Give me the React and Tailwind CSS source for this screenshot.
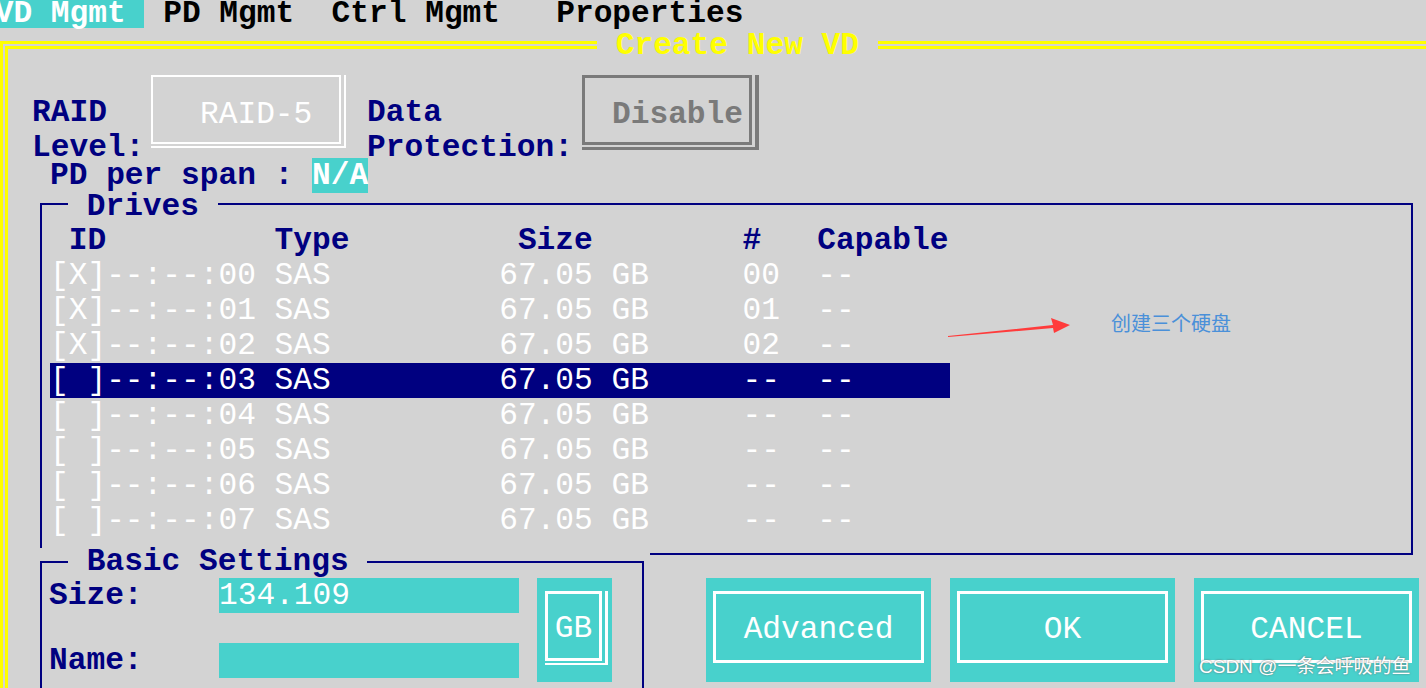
import React from "react";

const NAVY = "text-[#000080]";

const drives = [
  { id: "00", num: "00", checked: true },
  { id: "01", num: "01", checked: true },
  { id: "02", num: "02", checked: true },
  { id: "03", num: "--", checked: false, active: true },
  { id: "04", num: "--", checked: false },
  { id: "05", num: "--", checked: false },
  { id: "06", num: "--", checked: false },
  { id: "07", num: "--", checked: false },
];

const sp = (n) => " ".repeat(n);

// fixed character columns, like the text-mode screen
const headerLine = " ID" + sp(9) + "Type" + sp(9) + "Size" + sp(8) + "#" + sp(3) + "Capable";
const driveLine = (d) =>
  `${d.checked ? "[X]" : "[ ]"}--:--:${d.id} SAS${sp(9)}67.05 GB${sp(5)}${d.num}  --`;

const TextButton = ({ label }) => (
  <div className="h-[104px] w-[225px] shrink-0 bg-[#48d1cc] px-[7px] pt-[13px]">
    <div className="flex h-[72px] items-center justify-center border-[3px] border-white pt-[4px] text-white">
      {label}
    </div>
  </div>
);

export default function App() {
  return (
    <div className="relative h-[688px] w-full overflow-hidden bg-[#d3d3d3] font-['Liberation_Mono',monospace] text-[31.2px] leading-[35px]">
      {/* Top menu */}
      <div className="ml-[-24px] flex h-[28px] whitespace-pre font-bold leading-[28px] text-black">
        <span className="bg-[#48d1cc] text-white"> VD Mgmt </span>
        <span> PD Mgmt  Ctrl Mgmt   Properties</span>
      </div>

      {/* Dialog frame */}
      <fieldset className="mt-[5px] min-h-[700px] w-[1440px] border-[8px] border-double border-[#ffff00]">
        <legend className="ml-[589px] whitespace-pre pt-[2px] font-bold leading-[22px] text-[#ffff00]"> Create New VD </legend>

        {/* RAID / protection row */}
        <div className="mt-[18px] flex h-[83px] items-start pl-[24px]">
          <div className={`w-[119px] pt-[20px] font-bold ${NAVY}`}>
            <div>RAID</div>
            <div>Level:</div>
          </div>
          <div className="border-r-2 border-b-2 border-white pr-[3px] pb-[2px]">
            <div className="h-[69px] w-[190px] border-2 border-white pl-[47px] pt-[20px] text-white">RAID-5</div>
          </div>
          <div className={`ml-[21px] w-[215px] pt-[20px] font-bold ${NAVY}`}>
            <div>Data</div>
            <div>Protection:</div>
          </div>
          <div className="border-r-[4px] border-b-[3px] border-[#7a7a7a] pr-[3px] pb-[2px]">
            <div className="h-[70px] w-[170px] border-[3px] border-[#7a7a7a] pl-[27px] pt-[19px] font-bold text-[#7a7a7a]">Disable</div>
          </div>
        </div>

        <div className={`h-[29px] whitespace-pre pl-[42px] font-bold ${NAVY}`}>
          PD per span : <span className="bg-[#48d1cc] text-white">N/A</span>
        </div>

        {/* Drives */}
        <fieldset className="ml-[32px] w-[1373px] border-2 border-b-0 border-[#000080] pb-[10px]">
          <legend className={`ml-[26px] whitespace-pre pt-[6px] font-bold leading-[28px] ${NAVY}`}> Drives </legend>
          <div className="mt-[2px] pl-[8px]">
            <div className={`whitespace-pre font-bold ${NAVY}`}>{headerLine}</div>
            {drives.map((d) => (
              <div
                key={d.id}
                className={`h-[35px] w-[900px] whitespace-pre text-white ${d.active ? "bg-[#000080]" : ""}`}
              >
                {driveLine(d)}
              </div>
            ))}
          </div>
        </fieldset>

        {/* Basic settings + buttons */}
        <div className="ml-[32px] flex items-start">
          <fieldset className="h-[200px] w-[604px] shrink-0 border-2 border-[#000080]">
            <legend className={`ml-[26px] whitespace-pre font-bold leading-[28px] ${NAVY}`}> Basic Settings </legend>
            <div className="flex pl-[7px] pt-[2px]">
              <div>
                <div className="flex">
                  <div className={`w-[170px] font-bold ${NAVY}`}>Size:</div>
                  <div className="h-[35px] w-[300px] bg-[#48d1cc] text-white">134.109</div>
                </div>
                <div className="mt-[30px] flex">
                  <div className={`w-[170px] font-bold ${NAVY}`}>Name:</div>
                  <div className="h-[35px] w-[300px] bg-[#48d1cc]"></div>
                </div>
              </div>
              <div className="ml-[18px] h-[104px] w-[75px] shrink-0 bg-[#48d1cc] pl-[8px] pt-[13px]">
                <div className="w-fit border-r-[3px] border-b-2 border-white pr-[3px] pb-[2px]">
                  <div className="flex h-[70px] w-[57px] items-center justify-center border-[3px] border-white pt-[4px] text-white">
                    GB
                  </div>
                </div>
              </div>
            </div>
          </fieldset>

          <div className="ml-[6px] w-[763px] shrink-0">
            <div className="h-[7px] border-r-2 border-b-2 border-[#000080]"></div>
            <div className="mt-[23px] flex gap-[19px] pl-[56px]">
              <TextButton label="Advanced" />
              <TextButton label="OK" />
              <TextButton label="CANCEL" />
            </div>
          </div>
        </div>
      </fieldset>

      {/* Annotation over the screenshot */}
      <svg className="absolute left-[940px] top-[310px]" width="140" height="35" viewBox="0 0 140 35">
        <polygon points="8,26 113,15 111,8 130,15 114,23 113,18 8,27" fill="#ff3b3b" />
      </svg>
      <div className="absolute left-[1111px] top-[311px] font-['Noto_Sans_CJK_SC',sans-serif] text-[20px] leading-[24px] text-[#4a90d9]">
        创建三个硬盘
      </div>
      <div className="absolute left-[1199px] top-[655px] font-['Liberation_Sans','Noto_Sans_CJK_SC',sans-serif] text-[19px] leading-[24px] text-white [text-shadow:0_0_2px_#666]">
        CSDN @一条会呼吸的鱼
      </div>
    </div>
  );
}
